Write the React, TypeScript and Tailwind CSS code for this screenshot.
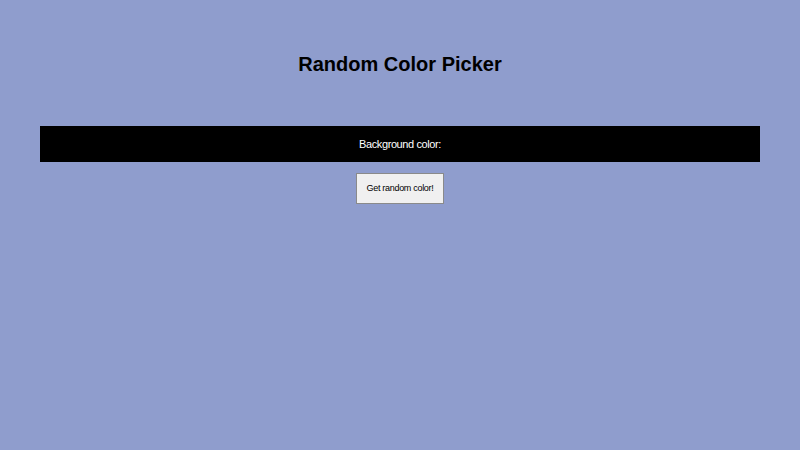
export default function App() {
  return (
    <div
      className="min-h-screen w-full bg-[#8f9dcd] pt-[50px]"
      style={{ fontFamily: '"Liberation Sans", Arial, sans-serif' }}
    >
      <h1 className="text-center text-[20px] font-bold leading-[28px] text-black">
        Random Color Picker
      </h1>
      <div className="mx-[40px] mt-[48px] flex h-[36px] items-center justify-center bg-black">
        <span className="text-[11px] tracking-[-0.4px] text-white">Background color:</span>
      </div>
      <div className="mt-[11px] flex justify-center">
        <button className="h-[31px] w-[88px] border border-[#8a8a8a] bg-[#f0f0f0] text-[9px] tracking-[-0.3px] text-black">
          Get random color!
        </button>
      </div>
    </div>
  );
}
